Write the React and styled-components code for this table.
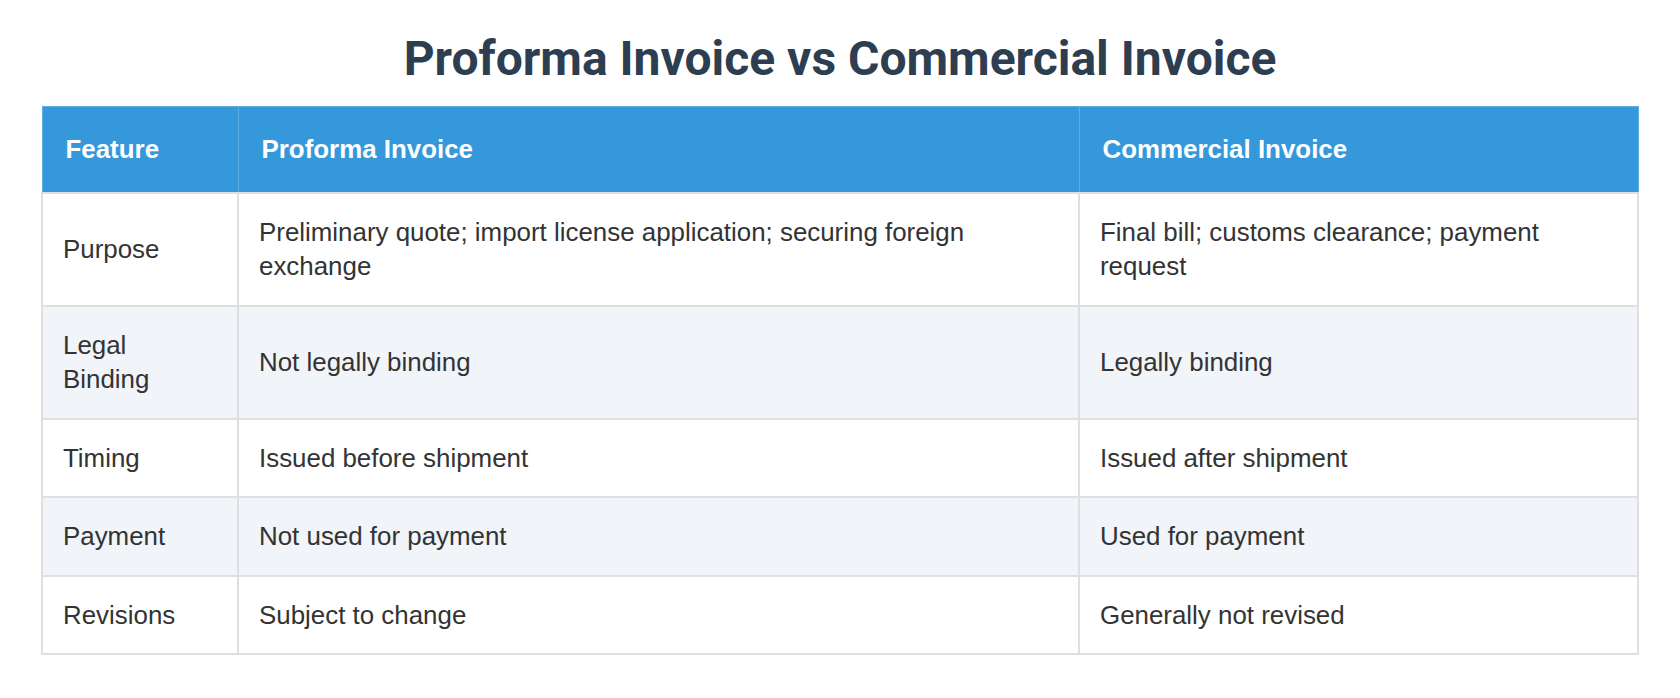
import React from 'react'
import styled, { createGlobalStyle } from 'styled-components'

const rows = [
  {
    feature: 'Purpose',
    proforma: 'Preliminary quote; import license application; securing foreign exchange',
    commercial: 'Final bill; customs clearance; payment request',
  },
  { feature: 'Legal Binding', proforma: 'Not legally binding', commercial: 'Legally binding' },
  { feature: 'Timing', proforma: 'Issued before shipment', commercial: 'Issued after shipment' },
  { feature: 'Payment', proforma: 'Not used for payment', commercial: 'Used for payment' },
  { feature: 'Revisions', proforma: 'Subject to change', commercial: 'Generally not revised' },
]

export default function App() {
  return (
    <>
      <GlobalStyle />
      <Page>
        <Title>Proforma Invoice vs Commercial Invoice</Title>
        <Table>
          <colgroup>
            <col style={{ width: 196 }} />
            <col style={{ width: 841 }} />
            <col />
          </colgroup>
          <thead>
            <tr>
              <Th>Feature</Th>
              <Th>Proforma Invoice</Th>
              <Th>Commercial Invoice</Th>
            </tr>
          </thead>
          <tbody>
            {rows.map((r, i) => (
              <Row key={r.feature} striped={i % 2 === 1}>
                <Td>{r.feature}</Td>
                <Td>{r.proforma}</Td>
                <Td>{r.commercial}</Td>
              </Row>
            ))}
          </tbody>
        </Table>
      </Page>
    </>
  )
}

//STYLES----------------------------------
const GlobalStyle = createGlobalStyle`
  body {
    margin: 0;
    background: #ffffff;
    font-family: 'Liberation Sans', Arial, sans-serif;
  }
`

const Page = styled.div`
  box-sizing: border-box;
  width: 1680px;
  padding: 30px 41px 40px 41px;
`

const Title = styled.h1`
  margin: 0 0 19px 0;
  text-align: center;
  font-family: Roboto, 'Liberation Sans', sans-serif;
  font-weight: 700;
  font-size: 48px;
  color: #2c3e50;
`

const Table = styled.table`
  width: 100%;
  border-collapse: collapse;
  table-layout: fixed;
  font-size: 25.9px;
  line-height: 34.5px;
`

const Th = styled.th`
  background: #3498db;
  color: #ffffff;
  font-weight: 700;
  text-align: left;
  padding: 25px 24px 25px 23px;
  border: 1px solid #5eaee3;
`

const Row = styled.tr`
  background: ${p => (p.striped ? '#f1f4f9' : '#ffffff')};
`

const Td = styled.td`
  color: #333333;
  padding: 21px 20px;
  border: 2px solid #dfdfdf;
  vertical-align: middle;
`
